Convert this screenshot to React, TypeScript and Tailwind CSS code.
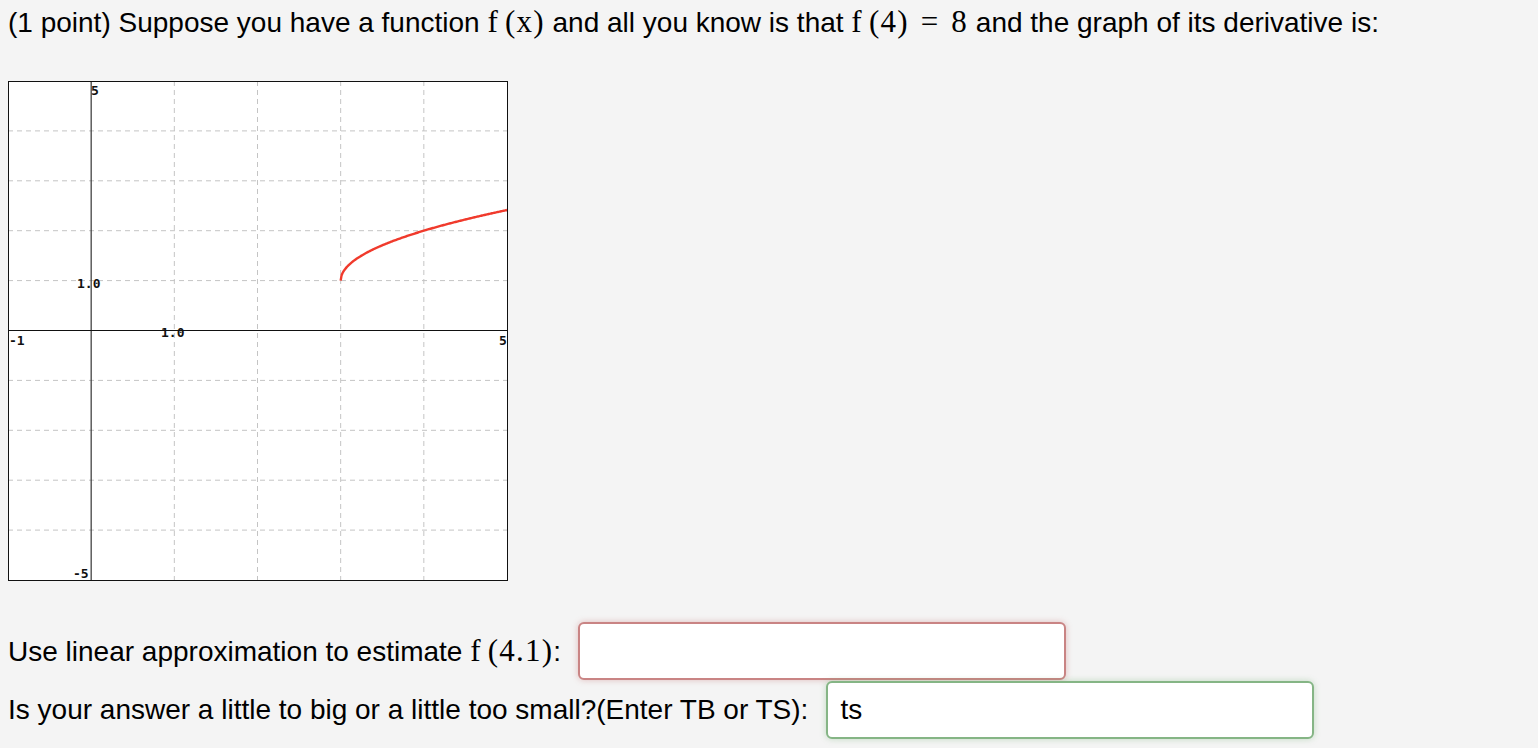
import React from "react";

// derivative graph: x in [-1, 5], y in [-5, 5], 500x500 px
const W = 500;
const H = 500;
const px = (x: number) => ((x + 1) / 6) * (W - 1);
const py = (y: number) => ((5 - y) / 10) * (H - 1);

function curvePoints() {
  const pts: string[] = [];
  for (let i = 0; i <= 200; i++) {
    const x = 3 + (2 * i) / 200;
    const y = 1 + Math.sqrt(x - 3);
    pts.push(`${px(x).toFixed(2)},${py(y).toFixed(2)}`);
  }
  return pts.join(" ");
}

function DerivativeGraph() {
  const vLines = [1, 2, 3, 4];
  const hLines = [4, 3, 2, 1, -1, -2, -3, -4];
  const label = { fontFamily: '"DejaVu Sans Mono", "Liberation Mono", monospace', fontWeight: 700, fontSize: 13 };
  return (
    <svg width={W} height={H} viewBox={`0 0 ${W} ${H}`} className="block bg-white">
      {vLines.map((x) => (
        <line key={`v${x}`} x1={px(x)} y1={0} x2={px(x)} y2={H} stroke="#c4c4c4" strokeWidth={1} strokeDasharray="5 4" />
      ))}
      {hLines.map((y) => (
        <line key={`h${y}`} x1={0} y1={py(y)} x2={W} y2={py(y)} stroke="#c4c4c4" strokeWidth={1} strokeDasharray="5 4" />
      ))}
      {/* axes */}
      <line x1={px(0)} y1={0} x2={px(0)} y2={H} stroke="#333" strokeWidth={1.2} />
      <line x1={0} y1={py(0)} x2={W} y2={py(0)} stroke="#111" strokeWidth={1.2} />
      <polyline points={curvePoints()} fill="none" stroke="#f03a2c" strokeWidth={2.4} strokeLinejoin="round" />
      <g style={label} fill="#111">
        <text x={83} y={14}>5</text>
        <text x={69} y={207}>1.0</text>
        <text x={1} y={264}>-1</text>
        <text x={153} y={256}>1.0</text>
        <text x={491} y={264}>5</text>
        <text x={65} y={497}>-5</text>
      </g>
      <rect x={0.5} y={0.5} width={W - 1} height={H - 1} fill="none" stroke="#111" strokeWidth={1} />
    </svg>
  );
}

const mathFont = "font-['Liberation_Serif','Times_New_Roman',serif] text-[31px] tracking-[1.2px]";

// MathJax-like function call, e.g. f(4.1)
function Fn({ arg }: { arg: string }) {
  return (
    <span className={mathFont}>
      <span className="mr-[6px]">f</span>({arg})
    </span>
  );
}

export default function App() {
  return (
    <main className="min-h-[748px] bg-[#f4f4f4] px-2 pt-[6px] text-black font-['Liberation_Sans',Arial,sans-serif] text-[28px] leading-[32px]">
      <p>
        (1 point) Suppose you have a function <Fn arg="x" /> and all you know is that <Fn arg="4" />
        <span className={`mx-[12px] ${mathFont}`}>=</span>
        <span className={mathFont}>8</span> and the graph of its derivative is:
      </p>

      <div className="mt-[42px] w-fit">
        <DerivativeGraph />
      </div>

      <div className="mt-[41px] flex flex-col gap-[1px]">
        <div className="flex items-center">
          <span>
            Use linear approximation to estimate <Fn arg="4.1" />:
          </span>
          <input
            type="text"
            className="ml-[17px] h-[58px] w-[488px] rounded-md border-2 border-[#c98484] bg-white px-3 outline-none shadow-[0_0_6px_rgba(190,90,90,0.35)]"
          />
        </div>
        <div className="flex items-center">
          <span>Is your answer a little to big or a little too small?(Enter TB or TS):</span>
          <input
            type="text"
            defaultValue="ts"
            className="ml-[18px] h-[58px] w-[488px] rounded-md border-2 border-[#85b585] bg-white px-3 text-[28px] outline-none shadow-[0_0_6px_rgba(100,170,100,0.35)]"
          />
        </div>
      </div>
    </main>
  );
}
